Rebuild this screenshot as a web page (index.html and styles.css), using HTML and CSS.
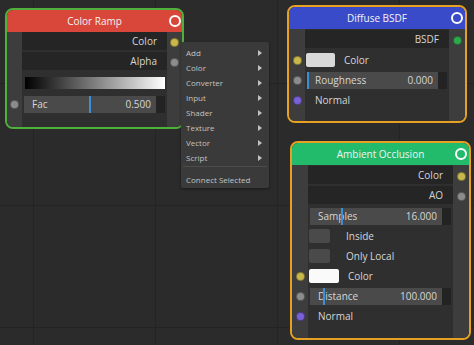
FILE: index.html
```html
<!DOCTYPE html>
<html lang="en">
<head>
    <meta charset="UTF-8">
    <title>Node Editor</title>
    <link rel="stylesheet" href="styles.css">
</head>
<body>
<div class="canvas">

    <!-- Color Ramp -->
    <div class="node node-ramp">
        <div class="node-head head-red">
            <span></span>
            <span class="node-title">Color Ramp</span>
            <span class="ring"></span>
        </div>
        <div class="node-body">
            <div class="row">
                <span></span>
                <div class="band">Color</div>
                <span class="sock sock-yellow"></span>
            </div>
            <div class="row">
                <span></span>
                <div class="band">Alpha</div>
                <span class="sock sock-gray"></span>
            </div>
            <div class="row row-ramp">
                <span></span>
                <div class="ramp"></div>
                <span></span>
            </div>
            <div class="row">
                <span class="sock sock-gray"></span>
                <div class="slider">
                    <div class="slider-fill">
                        <span>Fac</span><span>0.500</span>
                        <i class="marker" style="left: 49%"></i>
                    </div>
                    <div class="slider-end"></div>
                </div>
                <span></span>
            </div>
        </div>
    </div>

    <!-- Diffuse BSDF -->
    <div class="node node-diffuse">
        <div class="node-head head-blue">
            <span></span>
            <span class="node-title">Diffuse BSDF</span>
            <span class="ring"></span>
        </div>
        <div class="node-body">
            <div class="row">
                <span></span>
                <div class="band">BSDF</div>
                <span class="sock sock-green"></span>
            </div>
            <div class="row">
                <span class="sock sock-yellow"></span>
                <div class="field">
                    <span class="swatch swatch-grey"></span>
                    <span>Color</span>
                </div>
                <span></span>
            </div>
            <div class="row">
                <span class="sock sock-gray"></span>
                <div class="slider">
                    <div class="slider-fill">
                        <span>Roughness</span><span>0.000</span>
                        <i class="marker" style="left: 0%"></i>
                    </div>
                    <div class="slider-end"></div>
                </div>
                <span></span>
            </div>
            <div class="row">
                <span class="sock sock-purple"></span>
                <div class="label">Normal</div>
                <span></span>
            </div>
        </div>
    </div>

    <!-- Ambient Occlusion -->
    <div class="node node-ao">
        <div class="node-head head-green">
            <span></span>
            <span class="node-title">Ambient Occlusion</span>
            <span class="ring"></span>
        </div>
        <div class="node-body">
            <div class="row">
                <span></span>
                <div class="band">Color</div>
                <span class="sock sock-yellow"></span>
            </div>
            <div class="row">
                <span></span>
                <div class="band">AO</div>
                <span class="sock sock-gray"></span>
            </div>
            <div class="row">
                <span></span>
                <div class="slider">
                    <div class="slider-fill">
                        <span>Samples</span><span>16.000</span>
                        <i class="marker" style="left: 23.5%"></i>
                    </div>
                    <div class="slider-end"></div>
                </div>
                <span></span>
            </div>
            <div class="row">
                <span></span>
                <div class="field">
                    <span class="check"></span>
                    <span>Inside</span>
                </div>
                <span></span>
            </div>
            <div class="row">
                <span></span>
                <div class="field">
                    <span class="check"></span>
                    <span>Only Local</span>
                </div>
                <span></span>
            </div>
            <div class="row">
                <span class="sock sock-yellow"></span>
                <div class="field">
                    <span class="swatch swatch-white"></span>
                    <span>Color</span>
                </div>
                <span></span>
            </div>
            <div class="row">
                <span class="sock sock-gray"></span>
                <div class="slider">
                    <div class="slider-fill">
                        <span>Distance</span><span>100.000</span>
                        <i class="marker" style="left: 10%"></i>
                    </div>
                    <div class="slider-end"></div>
                </div>
                <span></span>
            </div>
            <div class="row">
                <span class="sock sock-purple"></span>
                <div class="label">Normal</div>
                <span></span>
            </div>
        </div>
    </div>

    <!-- context menu -->
    <ul class="menu">
        <li>Add <b></b></li>
        <li>Color <b></b></li>
        <li>Converter <b></b></li>
        <li>Input <b></b></li>
        <li>Shader <b></b></li>
        <li>Texture <b></b></li>
        <li>Vector <b></b></li>
        <li>Script <b></b></li>
        <li class="menu-sep"></li>
        <li>Connect Selected</li>
    </ul>

</div>
</body>
</html>
```

FILE: styles.css
```css
:root {
    --bg: #2b2b2b;
    --grid: #242424;
    --gutter: #3d3d3d;
    --mid: #2f2f2f;
    --band: #252525;
    --text: #d6d6d6;
    --sel-green: #4fb03a;
    --sel-orange: #e6a023;
}

* {
    box-sizing: border-box;
    margin: 0;
    padding: 0;
}

body {
    background: var(--bg);
    font-family: 'Open Sans', 'Noto Sans', sans-serif;
    font-size: 10px;
    color: var(--text);
    overflow: hidden;
}

.canvas {
    position: relative;
    width: 474px;
    height: 345px;
    background-color: var(--bg);
    background-image:
        linear-gradient(to right, var(--grid) 1px, transparent 1px),
        linear-gradient(to bottom, var(--grid) 1px, transparent 1px);
    background-size: 122px 122px;
    background-position: 33px 83px;
}

/* nodes */
.node {
    position: absolute;
    display: flex;
    flex-direction: column;
    border: 2px solid var(--sel-orange);
    border-radius: 8px;
    overflow: hidden;
    --g: 16px;
}

.node-ramp {
    left: 5px;
    top: 8px;
    width: 179px;
    height: 121px;
    border-color: var(--sel-green);
    --g: 15px;
}

.node-diffuse {
    left: 287px;
    top: 5px;
    width: 180px;
    height: 118px;
}

.node-ao {
    left: 290px;
    top: 141px;
    width: 181px;
    height: 199px;
}

.node-head {
    display: grid;
    grid-template-columns: var(--g) 1fr var(--g);
    align-items: center;
    height: 22px;
    flex: none;
    color: #f2f2f2;
}

.head-red { background: #d8473a; }
.head-blue { background: #3a4bc9; }
.head-green { background: #22ba6b; }

.node-title {
    text-align: center;
    white-space: nowrap;
}

.ring {
    justify-self: center;
    width: 12px;
    height: 12px;
    border: 2px solid #fff;
    border-radius: 50%;
}

.node-body {
    flex: 1;
    padding-top: 1px;
    background: linear-gradient(to right,
        var(--gutter) var(--g), var(--mid) var(--g),
        var(--mid) calc(100% - var(--g)), var(--gutter) calc(100% - var(--g)));
}

.node-ramp .node-body { padding-top: 0; }

.row {
    display: grid;
    grid-template-columns: var(--g) 1fr var(--g);
    align-items: center;
    height: 20px;
}

.row-ramp { height: 22px; }

.sock {
    justify-self: center;
    width: 9px;
    height: 9px;
    border-radius: 50%;
    border: 1px solid rgba(0, 0, 0, 0.35);
}

.sock-yellow { background: #c8b84c; }
.sock-gray { background: #8c8c8c; }
.sock-purple { background: #7a60d6; }
.sock-green { background: #2fa74b; }

.band {
    height: 18px;
    line-height: 18px;
    margin-bottom: 2px;
    padding-right: 10px;
    background: var(--band);
    text-align: right;
}

.ramp {
    height: 12px;
    margin: 0 2px 0 3px;
    background: linear-gradient(to right, #000, #fff);
}

.slider {
    display: flex;
    height: 17px;
    margin: 0 2px 0 2px;
}

.slider-fill {
    position: relative;
    flex: 1;
    display: flex;
    justify-content: space-between;
    align-items: center;
    padding: 0 5px 0 8px;
    background: #4a4a4a;
}

.slider-end {
    width: 9px;
    background: #232323;
}

.marker {
    position: absolute;
    top: 0;
    width: 2px;
    height: 100%;
    background: #3a8fd6;
}

.field {
    display: flex;
    align-items: center;
    gap: 9px;
    padding-left: 1px;
}

.swatch {
    width: 30px;
    height: 14px;
    border-radius: 2px;
}

.swatch-grey { background: #d9d9d9; width: 29px; }
.swatch-white { background: #fafafa; }

.check {
    width: 21px;
    height: 14px;
    margin-right: 7px;
    border-radius: 2px;
    background: #4a4a4a;
}

.label { padding-left: 10px; }

/* context menu */
.menu {
    position: absolute;
    left: 181px;
    top: 42px;
    width: 88px;
    height: 146px;
    padding: 3px 0 0;
    list-style: none;
    background: #3a3a3a;
    border-radius: 2px;
    box-shadow: 0 1px 3px rgba(0, 0, 0, 0.4);
    font-size: 8px;
    color: #c2c2c2;
}

.menu li {
    display: flex;
    justify-content: space-between;
    align-items: center;
    height: 15px;
    padding: 0 7px 0 5px;
}

.menu li b {
    width: 0;
    height: 0;
    border-left: 4px solid #c2c2c2;
    border-top: 3px solid transparent;
    border-bottom: 3px solid transparent;
}

.menu .menu-sep {
    height: 1px;
    margin: 1px 2px 5px;
    padding: 0;
    background: #4c4c4c;
}
```
